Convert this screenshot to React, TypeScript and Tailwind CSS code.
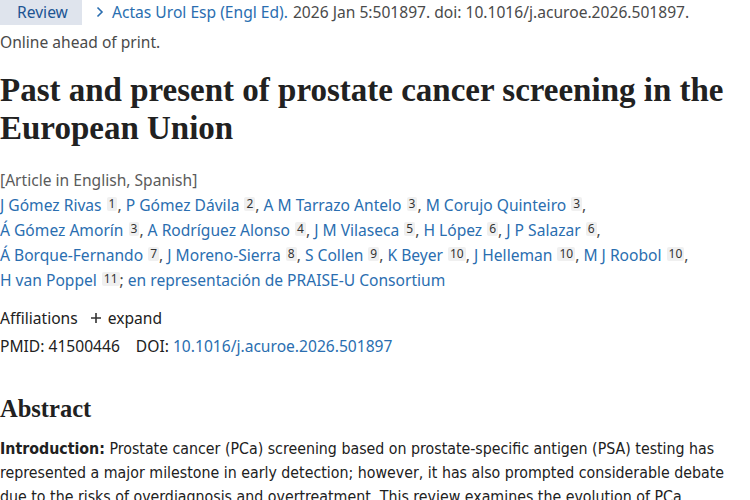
const authors = [
  [
    { name: "J Gómez Rivas", aff: "1" },
    { name: "P Gómez Dávila", aff: "2" },
    { name: "A M Tarrazo Antelo", aff: "3" },
    { name: "M Corujo Quinteiro", aff: "3" },
  ],
  [
    { name: "Á Gómez Amorín", aff: "3" },
    { name: "A Rodríguez Alonso", aff: "4" },
    { name: "J M Vilaseca", aff: "5" },
    { name: "H López", aff: "6" },
    { name: "J P Salazar", aff: "6" },
  ],
  [
    { name: "Á Borque-Fernando", aff: "7" },
    { name: "J Moreno-Sierra", aff: "8" },
    { name: "S Collen", aff: "9" },
    { name: "K Beyer", aff: "10" },
    { name: "J Helleman", aff: "10" },
    { name: "M J Roobol", aff: "10" },
  ],
];

const sans = "font-['Segoe_UI','Noto_Sans','Open_Sans',sans-serif]";

const Sup = ({ n }: { n: string }) => (
  <sup className="ml-[5px] relative -top-[3px] inline-block rounded-[2px] bg-[#f0f0f0] px-[2px] text-[12px] leading-[14px] text-[#333]">
    {n}
  </sup>
);

const Author = ({ name, aff }: { name: string; aff: string }) => (
  <>
    <a className="text-[#2a6eb0]">{name}</a>
    <Sup n={aff} />
  </>
);

export default function App() {
  return (
    <div className={`w-[750px] h-[500px] overflow-hidden bg-white text-[15.6px] text-[#212121] ${sans}`}>
      <div className="flex items-center h-[25px] whitespace-nowrap">
        <span className="flex items-center h-[25px] w-[82px] bg-[#dfe4ed] pl-[17px] text-[#205493]">Review</span>
        <span className="ml-[13px] text-[#2a6eb0] flex items-center">
          <svg width="10" height="12" viewBox="0 0 10 12" className="mr-[7px]">
            <path d="M2.5 1.5 L7 6 L2.5 10.5" fill="none" stroke="currentColor" strokeWidth="1.6" />
          </svg>
          Actas Urol Esp (Engl Ed).
        </span>
        <span className="ml-[5px] text-[#4a4a4a]">2026 Jan 5:501897. doi: 10.1016/j.acuroe.2026.501897.</span>
      </div>
      <div className="mt-[6px] text-[#4a4a4a] leading-[22px]">Online ahead of print.</div>

      <h1 className="mt-[18px] font-['Liberation_Serif',serif] font-bold text-[33px] leading-[38px] text-[#212121] whitespace-nowrap">
        Past and present of prostate cancer screening in the
        <br />
        European Union
      </h1>

      <div className="mt-[21px] text-[#5b5b5b] leading-[25px]">[Article in English, Spanish]</div>
      <div className="leading-[25px] whitespace-nowrap">
        {authors.map((line, i) => (
          <div key={i}>
            {line.map((a, j) => (
              <span key={j}>
                <Author name={a.name} aff={a.aff} />
                <span className="text-[#4a4a4a]">, </span>
              </span>
            ))}
          </div>
        ))}
        <div>
          <Author name="H van Poppel" aff="11" />
          <span className="text-[#4a4a4a]">; </span>
          <a className="text-[#2a6eb0]">en representación de PRAISE-U Consortium</a>
        </div>
      </div>

      <div className="mt-[13px] flex items-center leading-[24px]">
        <span>Affiliations</span>
        <span className="ml-[12px] flex items-center">
          <svg width="12" height="12" viewBox="0 0 12 12" className="mr-[6px]">
            <path d="M6 1 V11 M1 6 H11" stroke="#333" strokeWidth="1.6" />
          </svg>
          expand
        </span>
      </div>
      <div className="mt-[4px] leading-[24px]">
        <span>PMID: 41500446</span>
        <span className="ml-[16px]">DOI: </span>
        <a className="text-[#2a6eb0]">10.1016/j.acuroe.2026.501897</a>
      </div>

      <h2 className="mt-[36px] font-['Liberation_Serif',serif] font-bold text-[24.5px] leading-[30px] text-[#212121]">
        Abstract
      </h2>
      <p className="mt-[13px] font-['Liberation_Sans_Narrow','DejaVu_Sans_Condensed',sans-serif] text-[15.8px] leading-[24px] text-[#212121] pr-2">
        <b>Introduction:</b> Prostate cancer (PCa) screening based on prostate-specific antigen (PSA) testing has
        represented a major milestone in early detection; however, it has also prompted considerable debate
        due to the risks of overdiagnosis and overtreatment. This review examines the evolution of PCa
        screening in Europe.
      </p>
    </div>
  );
}
